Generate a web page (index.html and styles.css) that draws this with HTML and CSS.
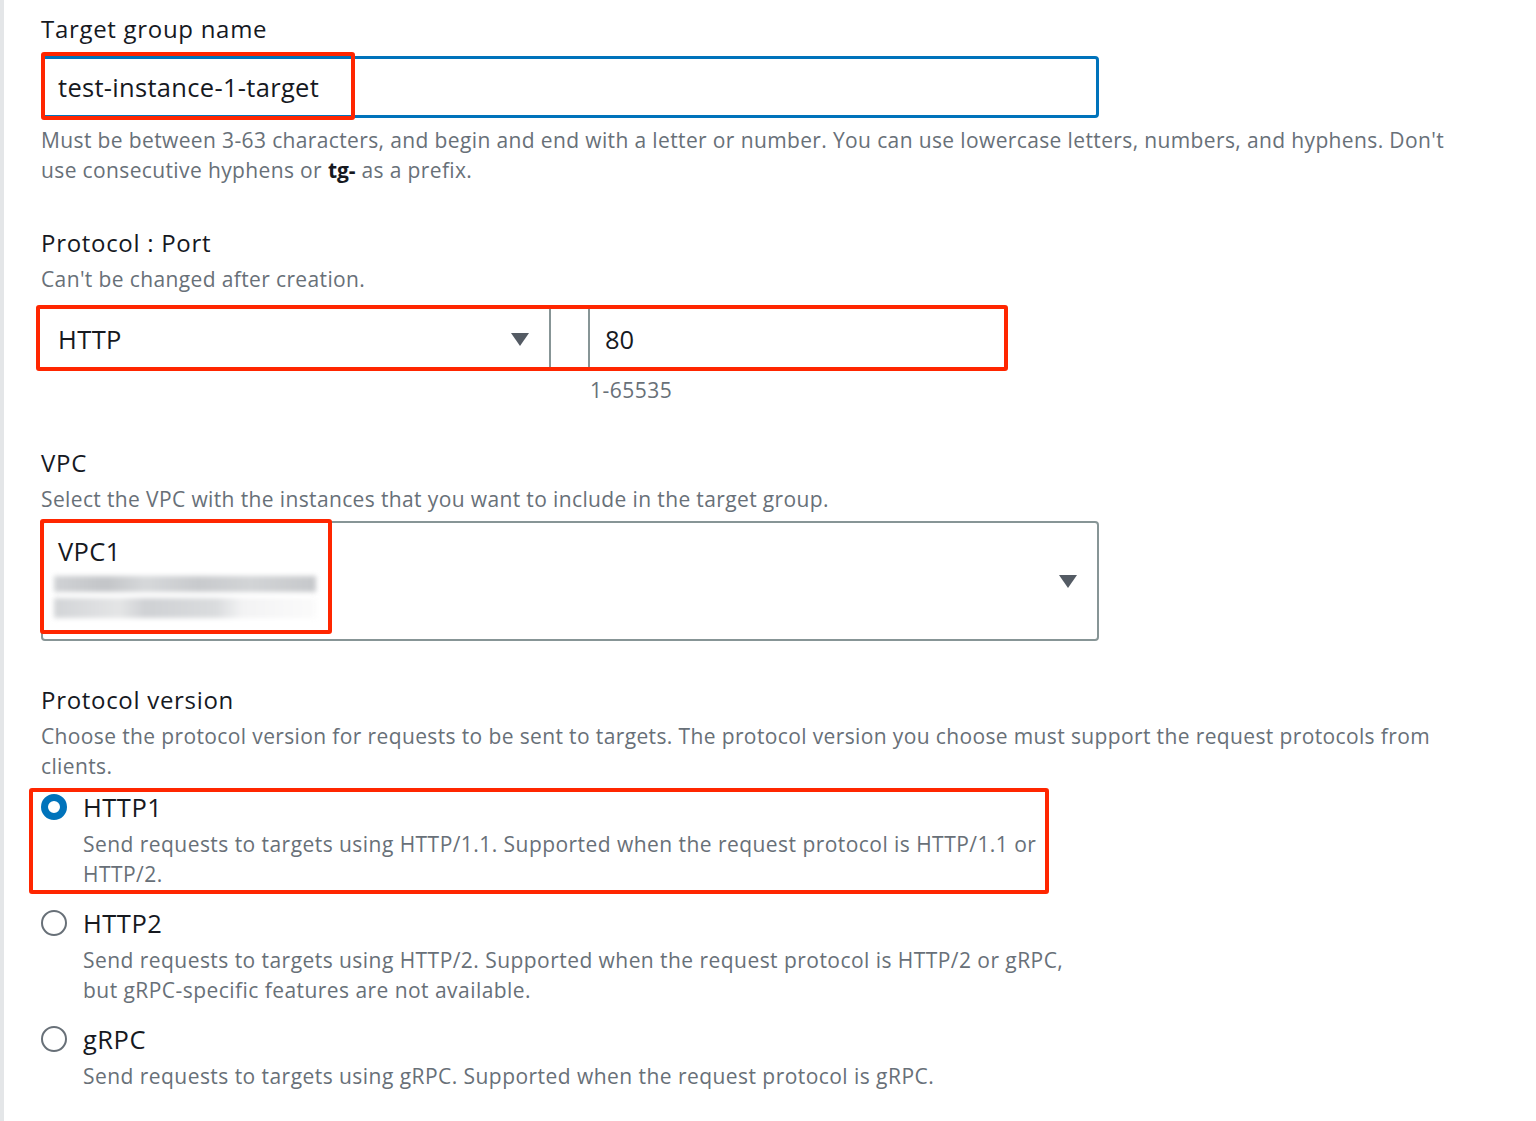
FILE: index.html
```html
<!DOCTYPE html>
<html lang="en">
  <head>
    <meta charset="UTF-8" />
    <meta name="viewport" content="width=device-width, initial-scale=1.0" />
    <title>Target group details</title>
    <link rel="stylesheet" href="styles.css">
  </head>
  <body>
    <div class="page">
      <div class="field field-name">
        <div class="label">Target group name</div>
        <div class="text-input focused">test-instance-1-target</div>
        <div class="mark mark-name"></div>
        <p class="hint">Must be between 3-63 characters, and begin and end with a letter or number. You can use lowercase letters, numbers, and hyphens. Don't use consecutive hyphens or <b>tg-</b> as a prefix.</p>
      </div>

      <div class="field field-port">
        <div class="label">Protocol : Port</div>
        <p class="desc">Can't be changed after creation.</p>
        <div class="port-row">
          <div class="select protocol-select">
            <span>HTTP</span>
            <span class="caret"></span>
          </div>
          <div class="colon-gap"></div>
          <div class="port-col">
            <div class="port-input">80</div>
            <div class="port-range">1-65535</div>
          </div>
          <div class="mark mark-port"></div>
        </div>
      </div>

      <div class="field field-vpc">
        <div class="label">VPC</div>
        <p class="desc">Select the VPC with the instances that you want to include in the target group.</p>
        <div class="select vpc-select">
          <div class="vpc-text">
            <span class="vpc-name">VPC1</span>
            <div class="blur-line blur-a"></div>
            <div class="blur-line blur-b"></div>
          </div>
          <span class="caret"></span>
          <div class="mark mark-vpc"></div>
        </div>
      </div>

      <div class="field field-version">
        <div class="label">Protocol version</div>
        <p class="desc">Choose the protocol version for requests to be sent to targets. The protocol version you choose must support the request protocols from clients.</p>
        <div class="radio-list">
          <div class="radio-item">
            <span class="radio checked"></span>
            <div class="radio-body">
              <div class="radio-label">HTTP1</div>
              <p class="radio-desc">Send requests to targets using HTTP/1.1. Supported when the request protocol is HTTP/1.1 or<br>HTTP/2.</p>
            </div>
            <div class="mark mark-http1"></div>
          </div>
          <div class="radio-item">
            <span class="radio"></span>
            <div class="radio-body">
              <div class="radio-label">HTTP2</div>
              <p class="radio-desc">Send requests to targets using HTTP/2. Supported when the request protocol is HTTP/2 or gRPC,<br>but gRPC-specific features are not available.</p>
            </div>
          </div>
          <div class="radio-item">
            <span class="radio"></span>
            <div class="radio-body">
              <div class="radio-label">gRPC</div>
              <p class="radio-desc">Send requests to targets using gRPC. Supported when the request protocol is gRPC.</p>
            </div>
          </div>
        </div>
      </div>
    </div>
  </body>
</html>
```

FILE: styles.css
```css
body {
  margin: 0;
  padding: 0;
  background: #ffffff;
  font-family: "Open Sans", "Noto Sans", sans-serif;
  color: #16191f;
}

.page {
  min-height: 1121px;
  box-sizing: border-box;
  border-left: 4px solid #e4e6e8;
  padding: 14px 0 0 37px;
  width: 1536px;
}

p {
  margin: 0;
}

.field {
  position: relative;
}

.label {
  font-size: 24px;
  line-height: 30px;
  letter-spacing: 0.7px;
}

.hint,
.desc {
  font-size: 21px;
  line-height: 30px;
  letter-spacing: 0.37px;
  color: #687078;
  width: 1430px;
}

.hint b {
  color: #16191f;
  font-weight: 700;
  letter-spacing: 0;
}

.mark {
  position: absolute;
  border: 4px solid #ff2600;
  border-radius: 3px;
  box-sizing: border-box;
  pointer-events: none;
}

/* target group name */
.text-input {
  margin-top: 12px;
  width: 1058px;
  height: 62px;
  box-sizing: border-box;
  border: 3px solid #aab7b8;
  border-radius: 4px;
  padding-left: 14px;
  font-size: 25.5px;
  letter-spacing: 0.3px;
  line-height: 56px;
}

.text-input.focused {
  border-color: #0073bb;
}

.mark-name {
  left: 0;
  top: 38px;
  width: 314px;
  height: 68px;
}

.hint {
  margin-top: 7px;
}

/* protocol : port */
.field-port {
  margin-top: 43px;
}

.desc {
  margin-top: 6px;
}

.port-row {
  position: relative;
  display: flex;
  margin-top: 15px;
}

.select {
  position: relative;
  display: flex;
  align-items: center;
  justify-content: space-between;
  box-sizing: border-box;
  font-size: 25.5px;
  letter-spacing: 0.4px;
}

.protocol-select {
  width: 510px;
  height: 60px;
  padding: 0 20px 0 17px;
  border-right: 2px solid #879596;
}

.caret {
  width: 0;
  height: 0;
  border-left: 9px solid transparent;
  border-right: 9px solid transparent;
  border-top: 13px solid #545b64;
}

.colon-gap {
  width: 37px;
  height: 60px;
  border-right: 2px solid #879596;
}

.port-col {
  width: 420px;
}

.port-input {
  height: 60px;
  line-height: 60px;
  padding-left: 15px;
  font-size: 25.5px;
}

.port-range {
  margin-top: 6px;
  font-size: 21px;
  letter-spacing: 0.5px;
  line-height: 30px;
  color: #687078;
}

.mark-port {
  left: -5px;
  top: -4px;
  width: 972px;
  height: 66px;
}

/* vpc */
.field-vpc {
  margin-top: 43px;
}

.vpc-select {
  margin-top: 7px;
  width: 1058px;
  height: 120px;
  border: 2px solid #879596;
  border-radius: 4px;
  padding: 0 20px 0 15px;
}

.vpc-text {
  align-self: flex-start;
  padding-top: 12px;
}

.vpc-name {
  display: block;
  line-height: 32px;
}

.blur-line {
  margin-left: -4px;
  filter: blur(2.5px);
}

.blur-a {
  width: 262px;
  height: 16px;
  margin-top: 9px;
  background: linear-gradient(to right, #d0d2d5 0%, #c3c5c8 20%, #d6d8da 35%, #c8cacd 55%, #d2d4d6 75%, #c6c8cb 100%);
}

.blur-b {
  width: 262px;
  height: 20px;
  margin-top: 6px;
  background: linear-gradient(to right, #d2d4d7 0%, #e4e5e6 25%, #cfd1d4 35%, #dadcde 62%, #f3f3f4 72%, #fbfbfb 100%);
}

.mark-vpc {
  left: -3px;
  top: -4px;
  width: 292px;
  height: 115px;
}

/* protocol version */
.field-version {
  margin-top: 44px;
}

.radio-list {
  position: relative;
  margin-top: 10px;
}

.radio-item {
  position: relative;
  display: flex;
  gap: 16px;
  margin-bottom: 18px;
}

.radio {
  flex: none;
  width: 26px;
  height: 26px;
  margin-top: 3px;
  box-sizing: border-box;
  border: 2px solid #687078;
  border-radius: 50%;
  background: #fff;
}

.radio.checked {
  border: 7px solid #0073bb;
}

.radio-label {
  font-size: 25.5px;
  line-height: 32px;
  letter-spacing: 0.5px;
}

.radio-desc {
  margin-top: 6px;
  font-size: 21px;
  line-height: 30px;
  letter-spacing: 0.45px;
  color: #687078;
}

.mark-http1 {
  left: -12px;
  top: -3px;
  width: 1020px;
  height: 106px;
}
```
